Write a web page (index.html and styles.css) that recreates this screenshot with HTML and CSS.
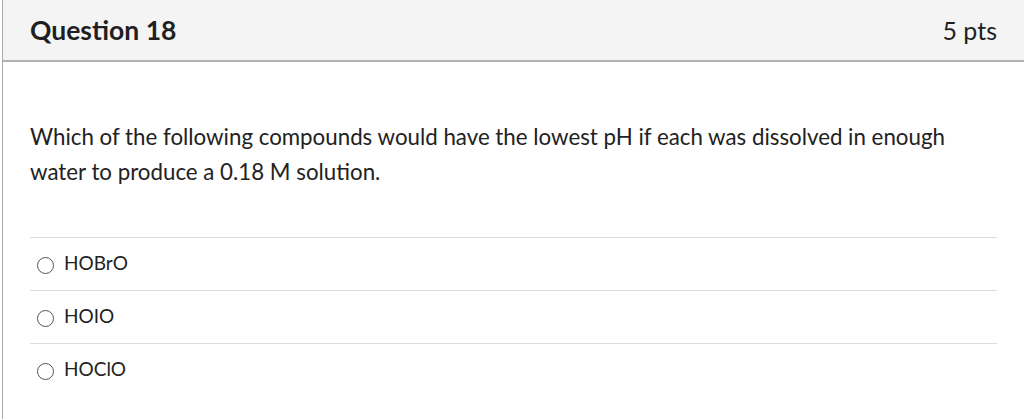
FILE: index.html
```html
<!DOCTYPE html>
<html>
<head>
<meta charset="utf-8">
<link rel="stylesheet" href="styles.css">
</head>
<body>
<div class="quiz">
  <div class="header">
    <h2 class="title">Question 18</h2>
    <span class="pts">5 pts</span>
  </div>
  <div class="content">
    <p class="text">Which of the following compounds would have the lowest pH if each was dissolved in enough water to produce a 0.18 M solution.</p>
    <div class="answers">
      <label class="answer"><span class="radio"></span><span class="label">HOBrO</span></label>
      <label class="answer"><span class="radio"></span><span class="label">HOIO</span></label>
      <label class="answer"><span class="radio"></span><span class="label">HOClO</span></label>
    </div>
  </div>
</div>
</body>
</html>
```
FILE: styles.css
```css
html, body {
  margin: 0;
  padding: 0;
  background: #fff;
}
body {
  font-family: Lato, "Liberation Sans", sans-serif;
  color: #2d3b45;
}
.quiz {
  margin-left: 2px;
  border-left: 1px solid #aaaaaa;
  height: 419px;
}
.header {
  display: flex;
  justify-content: space-between;
  align-items: center;
  height: 60px;
  background: #f4f4f4;
  border-bottom: 2px solid #b2b2b2;
  padding: 0 27px 0 27px;
  color: #1f1f1f;
}
.title {
  margin: 0;
  font-size: 26.5px;
  font-weight: 700;
}
.pts {
  font-size: 25px;
  font-weight: 400;
}
.content {
  padding: 0 27px;
  color: #222;
}
.text {
  margin: 0;
  padding-top: 57px;
  font-size: 22.3px;
  line-height: 35px;
  padding-right: 40px;
}
.answers {
  margin-top: 48px;
}
.answer {
  display: flex;
  align-items: center;
  height: 52px;
  box-sizing: content-box;
  border-top: 1px solid #dcdcdc;
}
.radio {
  width: 17px;
  height: 17px;
  border: 1.5px solid #555;
  border-radius: 50%;
  margin-left: 7px;
  margin-right: 10px;
  box-sizing: border-box;
  position: relative;
  top: 1px;
}
.label {
  font-size: 19px;
  line-height: 1;
  padding-bottom: 3px;
}
```
